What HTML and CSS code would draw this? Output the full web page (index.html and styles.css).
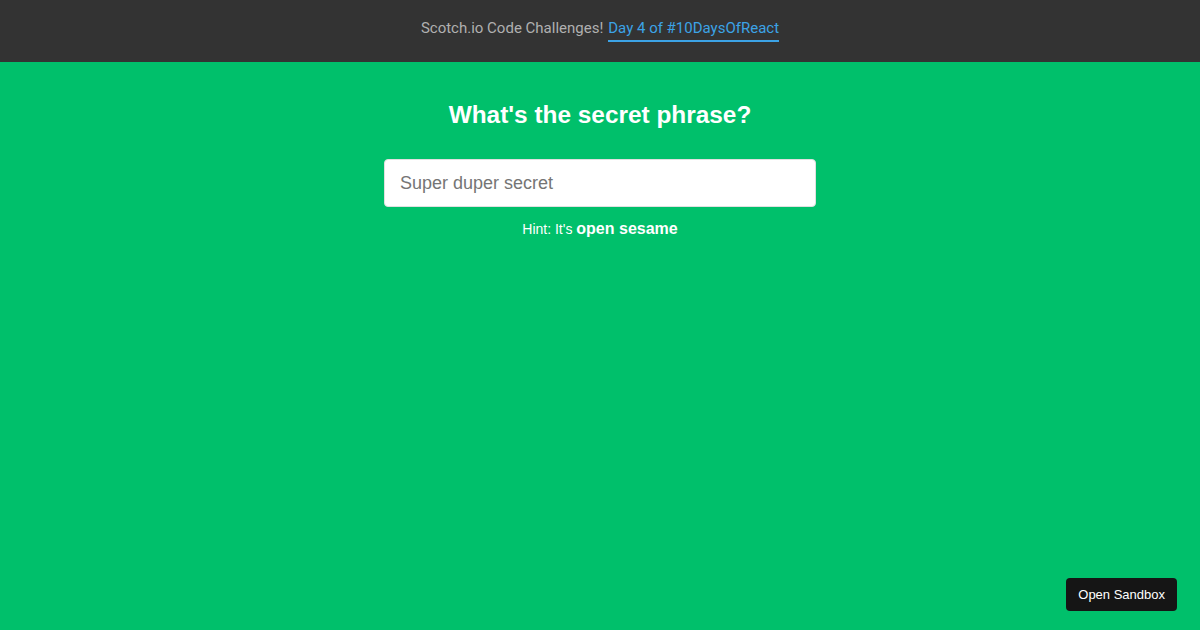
FILE: index.html
```html
<!DOCTYPE html>
<html>
<head>
<meta charset="utf-8">
<link rel="stylesheet" href="styles.css">
</head>
<body>
<header class="topbar">
  <span class="topbar-text">Scotch.io Code Challenges!</span>
  <a class="topbar-link" href="#">Day 4 of #10DaysOfReact</a>
</header>
<main class="main">
  <h1 class="title">What's the secret phrase?</h1>
  <input class="secret-input" type="text" placeholder="Super duper secret">
  <p class="hint">Hint: It's <strong>open sesame</strong></p>
</main>
<a class="sandbox-btn" href="#">Open Sandbox</a>
</body>
</html>
```
FILE: styles.css
```css
html, body {
  margin: 0;
  padding: 0;
  height: 100%;
}
body {
  background: #00c06b;
  font-family: "Liberation Sans", Arial, sans-serif;
  overflow: hidden;
}
.topbar {
  height: 62px;
  background: #333333;
  display: flex;
  align-items: center;
  justify-content: center;
  gap: 5px;
  font-family: Roboto, "Liberation Sans", sans-serif;
  font-size: 15px;
  line-height: 18px;
}
.topbar-text {
  color: #b0b0b0;
  margin-bottom: 6px;
}
.topbar-link {
  color: #3ca3e6;
  text-decoration: none;
  border-bottom: 2px solid #3ca3e6;
  padding-bottom: 3px;
  margin-top: -1px;
}
.main {
  display: flex;
  flex-direction: column;
  align-items: center;
  padding-top: 38px;
}
.title {
  margin: 0;
  color: #ffffff;
  font-size: 24.4px;
  font-weight: bold;
  line-height: 30px;
}
.secret-input {
  margin-top: 29px;
  width: 432px;
  height: 48px;
  box-sizing: border-box;
  border: 1px solid #e0e0e0;
  border-radius: 4px;
  padding: 0 15px;
  font-family: "Liberation Sans", Arial, sans-serif;
  font-size: 18px;
  color: #333;
  background: #fff;
  outline: none;
}
.secret-input::placeholder {
  color: #757575;
}
.hint {
  margin: 12px 0 0;
  color: #ffffff;
  font-size: 14px;
  line-height: 20px;
}
.hint strong {
  font-size: 16px;
}
.sandbox-btn {
  position: fixed;
  right: 23px;
  bottom: 19px;
  background: #151515;
  color: #ffffff;
  font-family: "Liberation Sans", Arial, sans-serif;
  font-size: 13px;
  line-height: 33px;
  padding: 0 12px;
  border-radius: 4px;
  text-decoration: none;
}
```
